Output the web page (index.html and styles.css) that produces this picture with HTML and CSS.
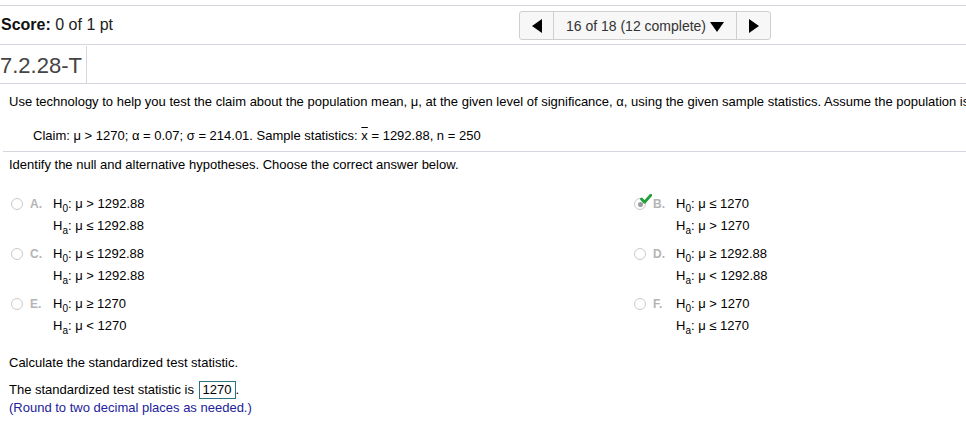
FILE: index.html
```html
<!DOCTYPE html>
<html>
<head>
<meta charset="utf-8">
<link rel="stylesheet" href="styles.css">
</head>
<body>
<div class="page">
  <div class="header">
    <div class="score"><b>Score:</b> 0 of 1 pt</div>
    <div class="nav">
      <div class="nav-btn"><span class="tri-left"></span></div>
      <div class="nav-mid">16 of 18 (12 complete) <span class="tri-down"></span></div>
      <div class="nav-btn"><span class="tri-right"></span></div>
    </div>
  </div>
  <div class="titlebar">
    <div class="qid">7.2.28-T</div>
  </div>
  <div class="problem">
    <p class="intro">Use technology to help you test the claim about the population mean, μ, at the given level of significance, α, using the given sample statistics. Assume the population is normally distributed.</p>
    <p class="claim">Claim: μ &gt; 1270; α = 0.07; σ = 214.01. Sample statistics: <span class="xbar">x</span> = 1292.88, n = 250</p>
  </div>
  <div class="work">
    <p class="prompt">Identify the null and alternative hypotheses. Choose the correct answer below.</p>
    <div class="options">
      <div class="opt">
        <span class="radio"></span><span class="letter">A.</span>
        <div class="hyp"><div>H<sub>0</sub>: μ &gt; 1292.88</div><div>H<sub>a</sub>: μ ≤ 1292.88</div></div>
      </div>
      <div class="opt">
        <span class="radio selected"><svg class="check" viewBox="0 0 12 10"><path d="M1.5 5 L4.5 8.2 L10.8 1.2" fill="none" stroke="#23a03c" stroke-width="2.8" stroke-linecap="round" stroke-linejoin="round"/></svg></span><span class="letter">B.</span>
        <div class="hyp"><div>H<sub>0</sub>: μ ≤ 1270</div><div>H<sub>a</sub>: μ &gt; 1270</div></div>
      </div>
      <div class="opt">
        <span class="radio"></span><span class="letter">C.</span>
        <div class="hyp"><div>H<sub>0</sub>: μ ≤ 1292.88</div><div>H<sub>a</sub>: μ &gt; 1292.88</div></div>
      </div>
      <div class="opt">
        <span class="radio"></span><span class="letter">D.</span>
        <div class="hyp"><div>H<sub>0</sub>: μ ≥ 1292.88</div><div>H<sub>a</sub>: μ &lt; 1292.88</div></div>
      </div>
      <div class="opt">
        <span class="radio"></span><span class="letter">E.</span>
        <div class="hyp"><div>H<sub>0</sub>: μ ≥ 1270</div><div>H<sub>a</sub>: μ &lt; 1270</div></div>
      </div>
      <div class="opt">
        <span class="radio"></span><span class="letter">F.</span>
        <div class="hyp"><div>H<sub>0</sub>: μ &gt; 1270</div><div>H<sub>a</sub>: μ ≤ 1270</div></div>
      </div>
    </div>
    <p class="calc">Calculate the standardized test statistic.</p>
    <p class="answer">The standardized test statistic is <span class="ansbox">1270</span>.</p>
    <p class="hint">(Round to two decimal places as needed.)</p>
  </div>
</div>
</body>
</html>
```
FILE: styles.css
```css
html, body {
  margin: 0;
  padding: 0;
  background: #fff;
}
body {
  font-family: "Liberation Sans", Arial, sans-serif;
  font-size: 13px;
  color: #000;
  overflow: hidden;
}
.page {
  width: 966px;
  overflow: hidden;
}
p { margin: 0; }

.header {
  margin-top: 5px;
  border-top: 1px solid #d6d6de;
  border-bottom: 1px solid #d6d6de;
  height: 38px;
  display: flex;
  align-items: center;
}
.score {
  width: 519px;
  font-size: 16px;
  color: #222;
  padding-left: 1px;
  box-sizing: border-box;
}
.score b { font-weight: bold; color: #111; }

.nav {
  display: flex;
  height: 29px;
  box-sizing: border-box;
  border: 1px solid #cfcfcf;
  border-radius: 3px;
  background: #f7f7f7;
  margin-top: 1px;
}
.nav-btn {
  width: 33px;
  display: flex;
  align-items: center;
  justify-content: center;
}
.nav-mid {
  width: 182px;
  border-left: 1px solid #cfcfcf;
  border-right: 1px solid #cfcfcf;
  display: flex;
  align-items: center;
  justify-content: center;
  font-size: 14px;
  color: #333;
  gap: 4px;
}
.tri-left {
  width: 0; height: 0;
  border-top: 7px solid transparent;
  border-bottom: 7px solid transparent;
  border-right: 10px solid #000;
}
.tri-right {
  width: 0; height: 0;
  border-top: 7px solid transparent;
  border-bottom: 7px solid transparent;
  border-left: 10px solid #000;
}
.tri-down {
  width: 0; height: 0;
  border-left: 7px solid transparent;
  border-right: 7px solid transparent;
  border-top: 10px solid #000;
  margin-top: 2px;
}

.titlebar {
  height: 38px;
  border-bottom: 1px solid #d6d6de;
  display: flex;
}
.qid {
  width: 87px;
  border-right: 1px solid #d6d6de;
  margin-top: 1px;
  font-size: 22px;
  color: #444;
  display: flex;
  align-items: center;
  padding-top: 3px;
  box-sizing: border-box;
}

.problem {
  margin-left: 3px;
  border-bottom: 1px solid #d6d6de;
  padding: 10px 0 7px 6px;
  line-height: 16px;
}
.intro {
  white-space: nowrap;
}
.claim {
  margin-top: 18px;
  padding-left: 24px;
}
.xbar {
  text-decoration: overline;
}

.work {
  padding-left: 9px;
  line-height: 16px;
}
.prompt {
  margin-top: 5px;
}
.options {
  margin-top: 20px;
  margin-left: 2px;
  display: grid;
  grid-template-columns: 623px 1fr;
  row-gap: 6px;
}
.opt {
  display: flex;
  align-items: flex-start;
  line-height: 22px;
}
.radio {
  position: relative;
  width: 12px;
  height: 12px;
  border: 1px solid #cacaca;
  border-radius: 50%;
  box-sizing: border-box;
  margin-top: 5px;
  margin-right: 7px;
  flex: none;
  background: #fff;
}
.radio.selected::after {
  content: "";
  position: absolute;
  left: 2.5px;
  top: 2.5px;
  width: 5px;
  height: 5px;
  border-radius: 50%;
  background: #9a9a9a;
}
.check {
  position: absolute;
  left: 5px;
  top: -5px;
  width: 12px;
  height: 10px;
  z-index: 2;
}
.letter {
  width: 23px;
  font-size: 12px;
  font-weight: bold;
  color: #b4b4b4;
  flex: none;
}
.hyp sub {
  font-size: 10px;
  vertical-align: -4px;
  line-height: 0;
}
.calc {
  margin-top: 18px;
}
.answer {
  margin-top: 9px;
  line-height: 20px;
}
.ansbox {
  display: inline-block;
  border: 1px solid #2b7383;
  padding: 0 3px;
  line-height: 16px;
  margin-left: 1px;
}
.hint {
  color: #22229c;
}
```
